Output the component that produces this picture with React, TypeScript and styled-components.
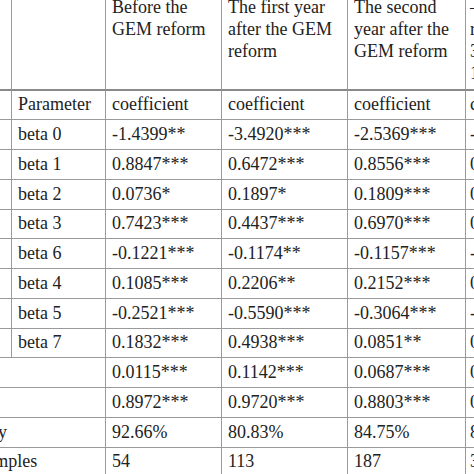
import * as React from 'react';
import styled, { createGlobalStyle } from 'styled-components';

const GlobalStyle = createGlobalStyle`
  html, body {
    margin: 0;
    padding: 0;
    background: #fff;
  }
`;

const Viewport = styled.div`
  width: 474px;
  height: 474px;
  overflow: hidden;
  background: #fff;
`;

// the table is cropped on the left and top, as in the source figure
const Table = styled.div`
  display: grid;
  grid-template-columns: 80px 94px 116px 126px 118px 120px;
  grid-template-rows: 99.5px;
  grid-auto-rows: 29.75px;
  margin-left: -68px;
  margin-top: -9px;
  width: max-content;
  font-family: 'Liberation Serif', 'Times New Roman', serif;
  font-size: 18px;
  color: #222;
`;

const HeadCell = styled.div<{ $last?: boolean }>`
  box-sizing: border-box;
  padding: 5px 4px 0 ${(p) => (p.$last ? '4px' : '6px')};
  line-height: 22px;
  border-right: 1px solid #9a9a9a;
  border-bottom: 2px solid #8a8a8a;
  white-space: nowrap;
  overflow: hidden;
`;

const Cell = styled.div<{ $span?: number; $last?: boolean }>`
  box-sizing: border-box;
  grid-column: span ${(p) => p.$span || 1};
  display: flex;
  align-items: center;
  padding-left: ${(p) => (p.$last ? '4px' : '6px')};
  border-right: 1px solid #9a9a9a;
  border-bottom: 1px solid #9a9a9a;
  white-space: nowrap;
  overflow: hidden;
`;

const Header = styled.div`
  display: contents;
`;

type Row = { label: string; param?: string; values: string[] };

const rows: Row[] = [
  { label: '', param: 'Parameter', values: ['coefficient', 'coefficient', 'coefficient', 'coefficient'] },
  { label: '', param: 'beta 0', values: ['-1.4399**', '-3.4920***', '-2.5369***', '-1.9521***'] },
  { label: '', param: 'beta 1', values: ['0.8847***', '0.6472***', '0.8556***', '0.7958***'] },
  { label: '', param: 'beta 2', values: ['0.0736*', '0.1897*', '0.1809***', '0.1402***'] },
  { label: '', param: 'beta 3', values: ['0.7423***', '0.4437***', '0.6970***', '0.6613***'] },
  { label: '', param: 'beta 6', values: ['-0.1221***', '-0.1174**', '-0.1157***', '-0.1186***'] },
  { label: '', param: 'beta 4', values: ['0.1085***', '0.2206**', '0.2152***', '0.1828***'] },
  { label: '', param: 'beta 5', values: ['-0.2521***', '-0.5590***', '-0.3064***', '-0.3391***'] },
  { label: '', param: 'beta 7', values: ['0.1832***', '0.4938***', '0.0851**', '0.1794***'] },
  { label: 'sigma', values: ['0.0115***', '0.1142***', '0.0687***', '0.0712***'] },
  { label: 'rho', values: ['0.8972***', '0.9720***', '0.8803***', '0.9104***'] },
  { label: 'Accuracy', values: ['92.66%', '80.83%', '84.75%', '85.41%'] },
  { label: 'Total samples', values: ['54', '113', '187', '354'] },
];

const App: React.FC = () => {
  return (
    <Viewport>
      <GlobalStyle />
      <Table>
        <Header>
          <HeadCell />
          <HeadCell />
          <HeadCell>
            Before the
            <br />
            GEM reform
          </HeadCell>
          <HeadCell>
            The first year
            <br />
            after the GEM
            <br />
            reform
          </HeadCell>
          <HeadCell>
            The second
            <br />
            year after the
            <br />
            GEM reform
          </HeadCell>
          <HeadCell $last>
            – pooled
            <br />
            rolling
            <br />
            3 years
            <br />
            1-step
          </HeadCell>
        </Header>
        {rows.map((row, i) => (
          <React.Fragment key={i}>
            {row.param !== undefined ? (
              <>
                <Cell>{row.label}</Cell>
                <Cell>{row.param}</Cell>
              </>
            ) : (
              <Cell $span={2}>{row.label}</Cell>
            )}
            {row.values.map((v, j) => (
              <Cell key={j} $last={j === 3}>
                {v}
              </Cell>
            ))}
          </React.Fragment>
        ))}
      </Table>
    </Viewport>
  );
};

export default App;
